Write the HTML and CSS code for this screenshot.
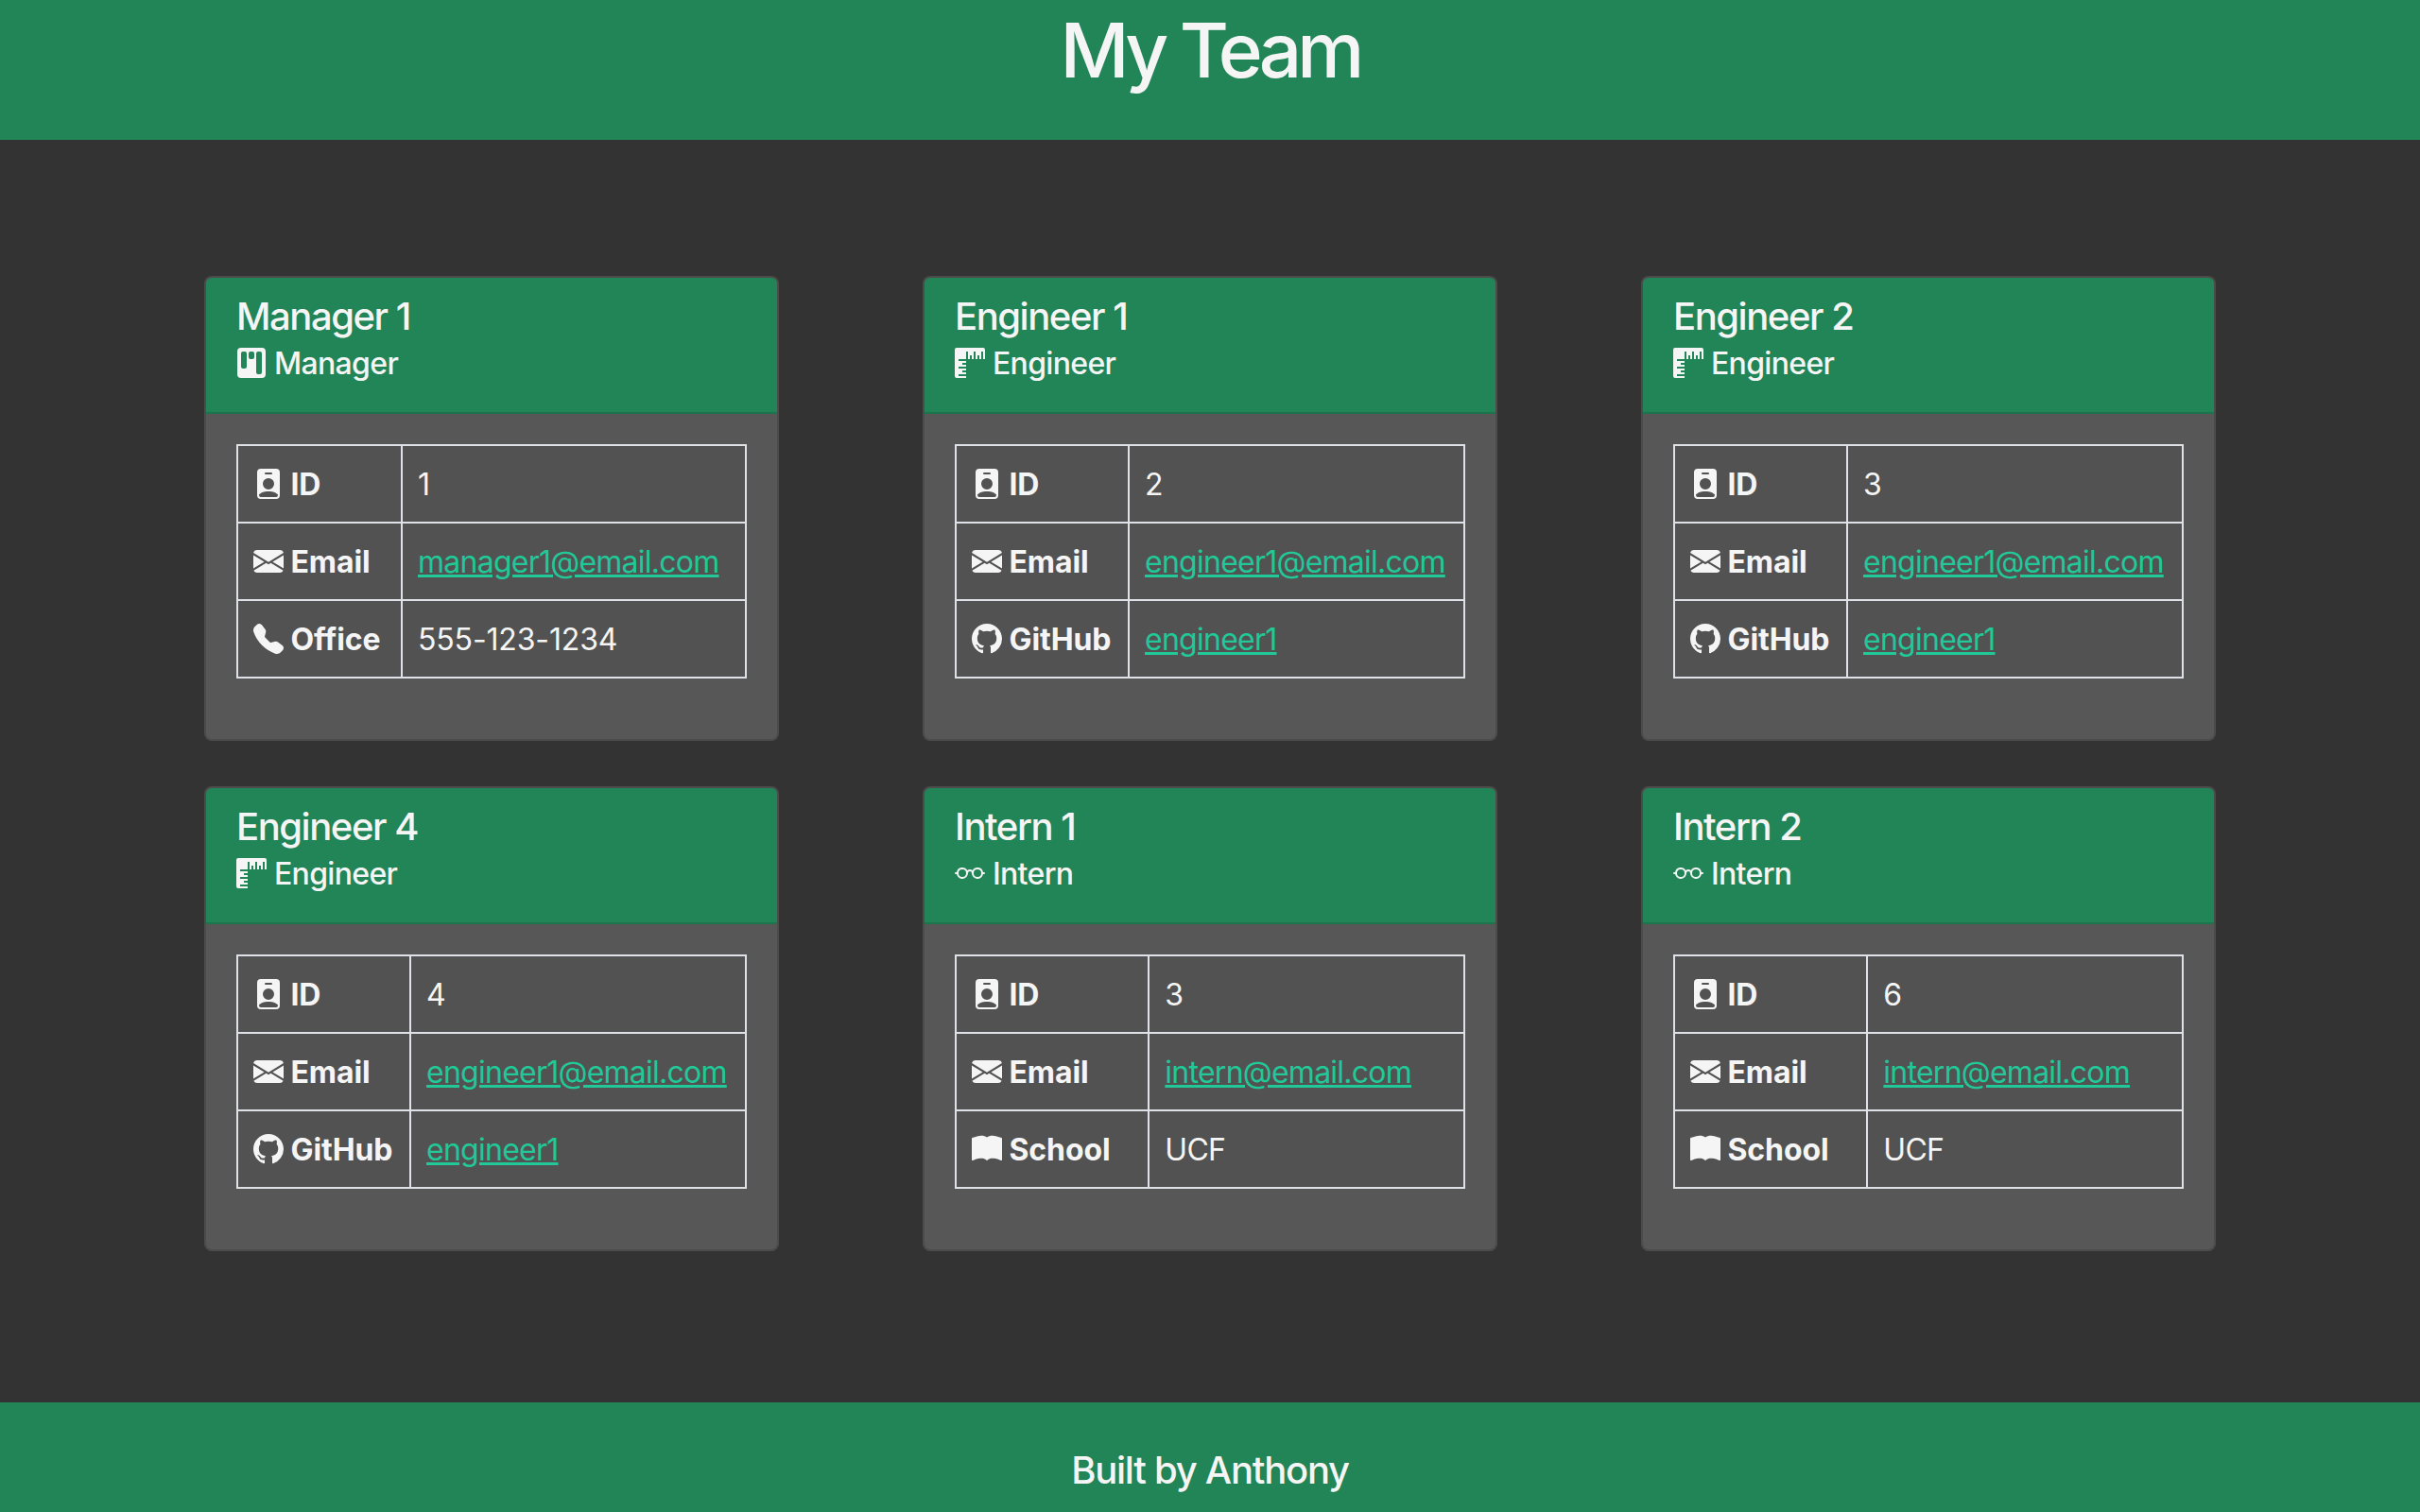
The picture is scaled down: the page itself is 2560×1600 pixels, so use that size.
FILE: index.html
```html
<!DOCTYPE html>
<html lang="en">
<head>
<meta charset="utf-8">
<title>My Team</title>
<link rel="stylesheet" href="styles.css">
</head>
<body>
<svg class="defs" xmlns="http://www.w3.org/2000/svg">
<symbol id="kanban" viewBox="0 0 16 16"><path d="M2.5 0a2 2 0 0 0-2 2v12a2 2 0 0 0 2 2h11a2 2 0 0 0 2-2V2a2 2 0 0 0-2-2h-11zm5 2h1a1 1 0 0 1 1 1v2a1 1 0 0 1-1 1h-1a1 1 0 0 1-1-1V3a1 1 0 0 1 1-1zm-5 1a1 1 0 0 1 1-1h1a1 1 0 0 1 1 1v7a1 1 0 0 1-1 1h-1a1 1 0 0 1-1-1V3zm9-1h1a1 1 0 0 1 1 1v10a1 1 0 0 1-1 1h-1a1 1 0 0 1-1-1V3a1 1 0 0 1 1-1z"/></symbol>
<symbol id="rulers" viewBox="0 0 16 16"><path d="M1 0a1 1 0 0 0-1 1v14a1 1 0 0 0 1 1h5v-1H2v-1h4v-1H4v-1h2v-1H2v-1h4V9H4V8h2V7H2V6h4V2h1v4h1V4h1v2h1V2h1v4h1V4h1v2h1V2h1v4h1V1a1 1 0 0 0-1-1H1z"/></symbol>
<symbol id="glasses" viewBox="0 0 16 16"><path d="M4 6a2 2 0 1 1 0 4 2 2 0 0 1 0-4zm2.625.547a3 3 0 0 0-5.584.953H.5a.5.5 0 0 0 0 1h.541A3 3 0 0 0 7 8a1 1 0 0 1 2 0 3 3 0 0 0 5.959.5h.541a.5.5 0 0 0 0-1h-.541a3 3 0 0 0-5.584-.953A1.993 1.993 0 0 0 8 6c-.532 0-1.016.208-1.375.547zM14 8a2 2 0 1 1-4 0 2 2 0 0 1 4 0z"/></symbol>
<symbol id="badge" viewBox="0 0 16 16"><path d="M2 2a2 2 0 0 1 2-2h8a2 2 0 0 1 2 2v12a2 2 0 0 1-2 2H4a2 2 0 0 1-2-2V2zm4.5 0a.5.5 0 0 0 0 1h3a.5.5 0 0 0 0-1h-3zM8 11a3 3 0 1 0 0-6 3 3 0 0 0 0 6zm5 2.755C12.146 12.825 10.623 12 8 12s-4.146.826-5 1.755V14a1 1 0 0 0 1 1h8a1 1 0 0 0 1-1v-.245z"/></symbol>
<symbol id="envelope" viewBox="0 0 16 16"><path d="M.05 3.555A2 2 0 0 1 2 2h12a2 2 0 0 1 1.95 1.555L8 8.414.05 3.555ZM0 4.697v7.104l5.803-3.558L0 4.697ZM6.761 8.83l-6.57 4.027A2 2 0 0 0 2 14h12a2 2 0 0 0 1.808-1.144l-6.57-4.027L8 9.586l-1.239-.757Zm3.436-.586L16 11.801V4.697l-5.803 3.546Z"/></symbol>
<symbol id="phone" viewBox="0 0 16 16"><path fill-rule="evenodd" d="M1.885.511a1.745 1.745 0 0 1 2.61.163L6.29 2.98c.329.423.445.974.315 1.494l-.547 2.19a.678.678 0 0 0 .178.643l2.457 2.457a.678.678 0 0 0 .644.178l2.189-.547a1.745 1.745 0 0 1 1.494.315l2.306 1.794c.829.645.905 1.87.163 2.611l-1.034 1.034c-.74.74-1.846 1.065-2.877.702a18.634 18.634 0 0 1-7.01-4.42 18.634 18.634 0 0 1-4.42-7.009c-.362-1.03-.037-2.137.703-2.877L1.885.511z"/></symbol>
<symbol id="github" viewBox="0 0 16 16"><path d="M8 0C3.58 0 0 3.58 0 8c0 3.54 2.29 6.53 5.47 7.59.4.07.55-.17.55-.38 0-.19-.01-.82-.01-1.49-2.01.37-2.53-.49-2.69-.94-.09-.23-.48-.94-.82-1.13-.28-.15-.68-.52-.01-.53.63-.01 1.08.58 1.23.82.72 1.21 1.87.87 2.33.66.07-.52.28-.87.51-1.07-1.78-.2-3.64-.89-3.64-3.95 0-.87.31-1.59.82-2.15-.08-.2-.36-1.02.08-2.12 0 0 .67-.21 2.2.82.64-.18 1.32-.27 2-.27.68 0 1.36.09 2 .27 1.53-1.04 2.2-.82 2.2-.82.44 1.1.16 1.92.08 2.12.51.56.82 1.27.82 2.15 0 3.07-1.87 3.75-3.65 3.95.29.25.54.73.54 1.48 0 1.07-.01 1.93-.01 2.2 0 .21.15.46.55.38A8.012 8.012 0 0 0 16 8c0-4.42-3.58-8-8-8z"/></symbol>
<symbol id="book" viewBox="0 0 16 16"><path d="M8 1.783C7.015.936 5.587.81 4.287.94c-1.514.153-3.042.672-3.994 1.105A.5.5 0 0 0 0 2.5v11a.5.5 0 0 0 .707.455c.882-.4 2.303-.881 3.68-1.02 1.409-.142 2.59.087 3.223.877a.5.5 0 0 0 .78 0c.633-.79 1.814-1.019 3.222-.877 1.378.139 2.8.62 3.681 1.02A.5.5 0 0 0 16 13.5v-11a.5.5 0 0 0-.293-.455c-.952-.433-2.48-.952-3.994-1.105C10.413.809 8.985.936 8 1.783z"/></symbol>
</svg>

<header class="site-header"><h1 class="site-title">My Team</h1></header>

<main class="team">
  <article class="card">
    <div class="card-head"><h2 class="card-name">Manager 1</h2><p class="card-role"><svg class="icon"><use href="#kanban"/></svg> Manager</p></div>
    <div class="card-body"><table class="info">
      <tr><th><svg class="icon"><use href="#badge"/></svg> ID</th><td>1</td></tr>
      <tr><th><svg class="icon"><use href="#envelope"/></svg> Email</th><td><a href="#">manager1@email.com</a></td></tr>
      <tr><th><svg class="icon"><use href="#phone"/></svg> Office</th><td class="digits">555-123-1234</td></tr>
    </table></div>
  </article>
  <article class="card">
    <div class="card-head"><h2 class="card-name">Engineer 1</h2><p class="card-role"><svg class="icon"><use href="#rulers"/></svg> Engineer</p></div>
    <div class="card-body"><table class="info">
      <tr><th><svg class="icon"><use href="#badge"/></svg> ID</th><td>2</td></tr>
      <tr><th><svg class="icon"><use href="#envelope"/></svg> Email</th><td><a href="#">engineer1@email.com</a></td></tr>
      <tr><th><svg class="icon"><use href="#github"/></svg> GitHub</th><td><a href="#">engineer1</a></td></tr>
    </table></div>
  </article>
  <article class="card">
    <div class="card-head"><h2 class="card-name">Engineer 2</h2><p class="card-role"><svg class="icon"><use href="#rulers"/></svg> Engineer</p></div>
    <div class="card-body"><table class="info">
      <tr><th><svg class="icon"><use href="#badge"/></svg> ID</th><td>3</td></tr>
      <tr><th><svg class="icon"><use href="#envelope"/></svg> Email</th><td><a href="#">engineer1@email.com</a></td></tr>
      <tr><th><svg class="icon"><use href="#github"/></svg> GitHub</th><td><a href="#">engineer1</a></td></tr>
    </table></div>
  </article>
  <article class="card">
    <div class="card-head"><h2 class="card-name">Engineer 4</h2><p class="card-role"><svg class="icon"><use href="#rulers"/></svg> Engineer</p></div>
    <div class="card-body"><table class="info">
      <tr><th><svg class="icon"><use href="#badge"/></svg> ID</th><td>4</td></tr>
      <tr><th><svg class="icon"><use href="#envelope"/></svg> Email</th><td><a href="#">engineer1@email.com</a></td></tr>
      <tr><th><svg class="icon"><use href="#github"/></svg> GitHub</th><td><a href="#">engineer1</a></td></tr>
    </table></div>
  </article>
  <article class="card">
    <div class="card-head"><h2 class="card-name">Intern 1</h2><p class="card-role"><svg class="icon"><use href="#glasses"/></svg> Intern</p></div>
    <div class="card-body"><table class="info">
      <tr><th><svg class="icon"><use href="#badge"/></svg> ID</th><td>3</td></tr>
      <tr><th><svg class="icon"><use href="#envelope"/></svg> Email</th><td><a href="#">intern@email.com</a></td></tr>
      <tr><th><svg class="icon"><use href="#book"/></svg> School</th><td>UCF</td></tr>
    </table></div>
  </article>
  <article class="card">
    <div class="card-head"><h2 class="card-name">Intern 2</h2><p class="card-role"><svg class="icon"><use href="#glasses"/></svg> Intern</p></div>
    <div class="card-body"><table class="info">
      <tr><th><svg class="icon"><use href="#badge"/></svg> ID</th><td>6</td></tr>
      <tr><th><svg class="icon"><use href="#envelope"/></svg> Email</th><td><a href="#">intern@email.com</a></td></tr>
      <tr><th><svg class="icon"><use href="#book"/></svg> School</th><td>UCF</td></tr>
    </table></div>
  </article>
</main>

<footer class="site-footer"><p class="footer-text">Built by Anthony</p></footer>
</body>
</html>
```
FILE: styles.css
```css
* { box-sizing: border-box; }
html, body { margin: 0; height: 100%; }
body {
  background: #333333;
  color: #f5f5f5;
  font-family: Inter, "Liberation Sans", sans-serif;
  font-size: 32px;
  line-height: 1.5;
  display: flex;
  flex-direction: column;
  height: 1600px;
  overflow: hidden;
}
.defs { display: none; }
.site-header { background: #218557; height: 148px; flex: none; text-align: center; }
.site-title { margin: 0; font-size: 80px; font-weight: 500; line-height: 1.2; padding-top: 5px; letter-spacing: -4.9px; }
.team {
  flex: 1;
  display: grid;
  grid-template-columns: repeat(3, 608px);
  justify-content: space-between;
  align-content: start;
  row-gap: 48px;
  padding: 144px 216px 0;
}
.card {
  background: #575757;
  border: 2px solid rgba(0, 0, 0, .125);
  border-radius: 8px;
  overflow: hidden;
}
.card-head {
  background: #218557;
  padding: 17px 32px 0;
  height: 144px;
  border-bottom: 2px solid rgba(0, 0, 0, .125);
}
.card-name { margin: 0; font-size: 40px; font-weight: 550; line-height: 1.2; padding-bottom: 2px; letter-spacing: -1.45px; }
.card-role { margin: 0; font-size: 32px; font-weight: 550; line-height: 1.5; letter-spacing: -.65px; }
.card-body { padding: 32px; }
.info {
  width: 100%;
  border-collapse: collapse;
  background: #525252;
  margin-bottom: 32px;
}
.info th, .info td { border: 2px solid #dee2e6; padding: 17px 16px 15px; text-align: left; white-space: nowrap; }
.info th { font-weight: 700; letter-spacing: -.1px; }
.info td { font-weight: 400; letter-spacing: -.75px; }
.info td.digits { letter-spacing: -.15px; }
.info a { color: #20c997; }
.icon { width: 32px; height: 32px; fill: currentColor; vertical-align: -4px; }
.site-footer { background: #218557; height: 116px; flex: none; text-align: center; padding-top: 48px; }
.footer-text { margin: 0; font-size: 40px; font-weight: 550; line-height: 1.2; letter-spacing: -1.25px; }
```
